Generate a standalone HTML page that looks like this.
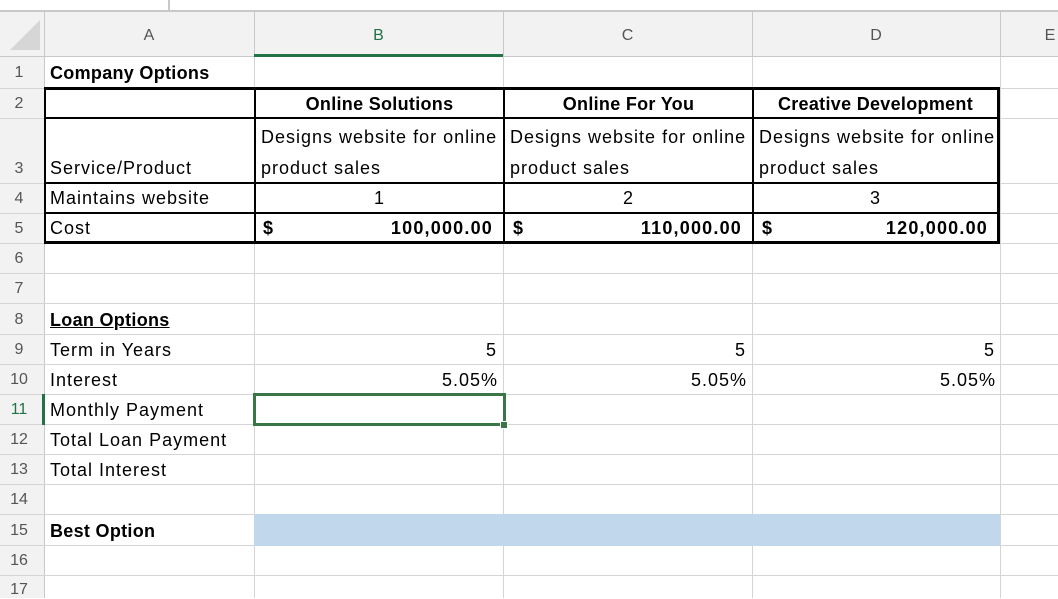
<!DOCTYPE html>
<html><head><meta charset="utf-8"><style>
*{margin:0;padding:0;box-sizing:border-box}
body{width:1058px;height:598px;overflow:hidden;background:#fff;font-family:"Liberation Sans",sans-serif;position:relative}
.a{position:absolute}
.hl{position:absolute;height:1px;background:#d4d4d4}
.vl{position:absolute;width:1px;background:#d4d4d4}
.t{position:absolute;font-size:18px;color:#000;white-space:nowrap;letter-spacing:1px;top:0}
.b{font-weight:bold;letter-spacing:0.3px}
.rn{position:absolute;left:0;width:38px;text-align:center;font-size:16px;color:#555}
.ch{position:absolute;top:27px;font-size:16px;color:#555;text-align:center}
.bk{position:absolute;background:#000}
.r{text-align:right}
</style></head><body>
<div class="a" style="left:0;top:10px;width:1058px;height:2px;background:#c8c8c8"></div>
<div class="a" style="left:168px;top:0;width:2px;height:10px;background:#c8c8c8"></div>
<div class="a" style="left:0;top:12px;width:1058px;height:45px;background:#f2f2f2"></div>
<div class="a" style="left:0;top:12px;width:44px;height:586px;background:#f2f2f2"></div>
<svg class="a" style="left:8px;top:18px" width="34" height="34"><polygon points="32,2 32,32 2,32" fill="#d6d6d6"/></svg>
<div class="a" style="left:44px;top:12px;width:1px;height:586px;background:#c8c8c8"></div>
<div class="a" style="left:0;top:56px;width:1058px;height:1px;background:#c8c8c8"></div>
<div class="ch" style="left:44px;width:210px">A</div>
<div class="ch" style="left:254px;width:249px;color:#217346">B</div>
<div class="ch" style="left:503px;width:249px">C</div>
<div class="ch" style="left:752px;width:248px">D</div>
<div class="ch" style="left:1030px;width:40px">E</div>
<div class="a" style="left:254px;top:12px;width:1px;height:45px;background:#c8c8c8"></div>
<div class="a" style="left:503px;top:12px;width:1px;height:45px;background:#c8c8c8"></div>
<div class="a" style="left:752px;top:12px;width:1px;height:45px;background:#c8c8c8"></div>
<div class="a" style="left:1000px;top:12px;width:1px;height:45px;background:#c8c8c8"></div>
<div class="a" style="left:254px;top:54px;width:249px;height:3px;background:#217346"></div>
<div class="vl" style="left:254px;top:57px;height:541px"></div>
<div class="vl" style="left:503px;top:57px;height:541px"></div>
<div class="vl" style="left:752px;top:57px;height:541px"></div>
<div class="vl" style="left:1000px;top:57px;height:541px"></div>
<div class="hl" style="left:0;top:88px;width:1058px"></div>
<div class="hl" style="left:0;top:118px;width:1058px"></div>
<div class="hl" style="left:0;top:183px;width:1058px"></div>
<div class="hl" style="left:0;top:213px;width:1058px"></div>
<div class="hl" style="left:0;top:243px;width:1058px"></div>
<div class="hl" style="left:0;top:273px;width:1058px"></div>
<div class="hl" style="left:0;top:303px;width:1058px"></div>
<div class="hl" style="left:0;top:334px;width:1058px"></div>
<div class="hl" style="left:0;top:364px;width:1058px"></div>
<div class="hl" style="left:0;top:394px;width:1058px"></div>
<div class="hl" style="left:0;top:424px;width:1058px"></div>
<div class="hl" style="left:0;top:454px;width:1058px"></div>
<div class="hl" style="left:0;top:484px;width:1058px"></div>
<div class="hl" style="left:0;top:514px;width:1058px"></div>
<div class="hl" style="left:0;top:545px;width:1058px"></div>
<div class="hl" style="left:0;top:575px;width:1058px"></div>
<div class="rn" style="top:64px">1</div>
<div class="rn" style="top:95px">2</div>
<div class="rn" style="top:160px">3</div>
<div class="rn" style="top:190px">4</div>
<div class="rn" style="top:220px">5</div>
<div class="rn" style="top:250px">6</div>
<div class="rn" style="top:280px">7</div>
<div class="rn" style="top:311px">8</div>
<div class="rn" style="top:341px">9</div>
<div class="rn" style="top:371px">10</div>
<div class="rn" style="top:401px;color:#217346">11</div>
<div class="rn" style="top:431px">12</div>
<div class="rn" style="top:461px">13</div>
<div class="rn" style="top:491px">14</div>
<div class="rn" style="top:522px">15</div>
<div class="rn" style="top:552px">16</div>
<div class="rn" style="top:581px">17</div>
<div class="a" style="left:42px;top:394px;width:3px;height:31px;background:#217346"></div>
<div class="a" style="left:254px;top:514px;width:746px;height:32px;background:#c0d7ec"></div>
<div class="bk" style="left:44px;top:87px;width:956px;height:3px"></div>
<div class="bk" style="left:44px;top:241px;width:956px;height:3px"></div>
<div class="bk" style="left:997px;top:87px;width:3px;height:157px"></div>
<div class="bk" style="left:44px;top:117px;width:956px;height:2px"></div>
<div class="bk" style="left:44px;top:182px;width:956px;height:2px"></div>
<div class="bk" style="left:44px;top:212px;width:956px;height:2px"></div>
<div class="bk" style="left:254px;top:87px;width:2px;height:157px"></div>
<div class="bk" style="left:503px;top:87px;width:2px;height:157px"></div>
<div class="bk" style="left:752px;top:87px;width:2px;height:157px"></div>
<div class="bk" style="left:44px;top:87px;width:2px;height:157px"></div>
<div class="t b" style="left:50px;top:63px">Company Options</div>
<div class="t b" style="left:254px;width:251px;text-align:center;top:94px">Online Solutions</div>
<div class="t b" style="left:503px;width:251px;text-align:center;top:94px">Online For You</div>
<div class="t b" style="left:752px;width:247px;text-align:center;top:94px">Creative Development</div>
<div class="t" style="left:261px;top:127px">Designs website for online</div>
<div class="t" style="left:261px;top:158px">product sales</div>
<div class="t" style="left:510px;top:127px">Designs website for online</div>
<div class="t" style="left:510px;top:158px">product sales</div>
<div class="t" style="left:759px;top:127px">Designs website for online</div>
<div class="t" style="left:759px;top:158px">product sales</div>
<div class="t" style="left:50px;top:158px">Service/Product</div>
<div class="t" style="left:50px;top:188px">Maintains website</div>
<div class="t" style="left:254px;width:251px;text-align:center;top:188px">1</div>
<div class="t" style="left:503px;width:251px;text-align:center;top:188px">2</div>
<div class="t" style="left:752px;width:247px;text-align:center;top:188px">3</div>
<div class="t" style="left:50px;top:218px">Cost</div>
<div class="t b" style="left:263px;top:218px">$</div>
<div class="t b r" style="left:300px;width:193px;top:218px;letter-spacing:1.2px">100,000.00</div>
<div class="t b" style="left:513px;top:218px">$</div>
<div class="t b r" style="left:549px;width:193px;top:218px;letter-spacing:1.2px">110,000.00</div>
<div class="t b" style="left:762px;top:218px">$</div>
<div class="t b r" style="left:795px;width:193px;top:218px;letter-spacing:1.2px">120,000.00</div>
<div class="t b" style="left:50px;top:310px;text-decoration:underline">Loan Options</div>
<div class="t" style="left:50px;top:340px">Term in Years</div>
<div class="t r" style="left:254px;width:243px;top:340px">5</div>
<div class="t r" style="left:503px;width:243px;top:340px">5</div>
<div class="t r" style="left:752px;width:243px;top:340px">5</div>
<div class="t" style="left:50px;top:370px">Interest</div>
<div class="t r" style="left:254px;width:244px;top:370px">5.05%</div>
<div class="t r" style="left:503px;width:244px;top:370px">5.05%</div>
<div class="t r" style="left:752px;width:244px;top:370px">5.05%</div>
<div class="t" style="left:50px;top:400px">Monthly Payment</div>
<div class="t" style="left:50px;top:430px">Total Loan Payment</div>
<div class="t" style="left:50px;top:460px">Total Interest</div>
<div class="t b" style="left:50px;top:521px">Best Option</div>
<div class="a" style="left:253px;top:393px;width:253px;height:33px;border:3px solid #3a7547"></div>
<div class="a" style="left:500px;top:421px;width:8px;height:8px;background:#3a7547;border:1px solid #fff"></div>
</body></html>
